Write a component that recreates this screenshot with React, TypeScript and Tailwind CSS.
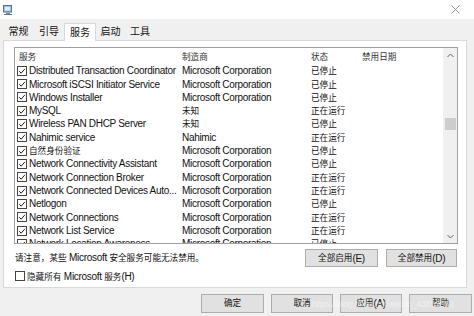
import React from "react";

const CJK = /([\u3000-\u303f\u3400-\u9fff\uff00-\uffef]+)/;

function T({ s, cjk = "text-[8.6px]" }: { s: string; cjk?: string }) {
  const parts = s.split(CJK);
  return (
    <>
      {parts.map((p, i) =>
        CJK.test(p) ? (
          <span key={i} className={cjk + " tracking-normal"}>
            {p}
          </span>
        ) : (
          <span key={i}>{p}</span>
        )
      )}
    </>
  );
}

const rows: [string, string, string][] = [
  ["Distributed Transaction Coordinator", "Microsoft Corporation", "已停止"],
  ["Microsoft iSCSI Initiator Service", "Microsoft Corporation", "已停止"],
  ["Windows Installer", "Microsoft Corporation", "已停止"],
  ["MySQL", "未知", "正在运行"],
  ["Wireless PAN DHCP Server", "未知", "已停止"],
  ["Nahimic service", "Nahimic", "正在运行"],
  ["自然身份验证", "Microsoft Corporation", "已停止"],
  ["Network Connectivity Assistant", "Microsoft Corporation", "已停止"],
  ["Network Connection Broker", "Microsoft Corporation", "正在运行"],
  ["Network Connected Devices Auto...", "Microsoft Corporation", "正在运行"],
  ["Netlogon", "Microsoft Corporation", "已停止"],
  ["Network Connections", "Microsoft Corporation", "正在运行"],
  ["Network List Service", "Microsoft Corporation", "正在运行"],
  ["Network Location Awareness", "Microsoft Corporation", "已停止"],
];

function Check({ checked = true }: { checked?: boolean }) {
  return (
    <svg width="10" height="10" viewBox="0 0 10 10" className="shrink-0">
      <rect x="0.5" y="0.5" width="9" height="9" fill="#fff" stroke="#444" strokeWidth="1" />
      {checked && (
        <path d="M2.2 5.2 L4.2 7.2 L7.9 2.8" fill="none" stroke="#222" strokeWidth="1" />
      )}
    </svg>
  );
}

function Btn({ label, w }: { label: string; w: string }) {
  return (
    <div
      className={
        "h-full flex items-center justify-center bg-[#e1e1e1] border border-[#adadad] text-[#111] " + w
      }
    >
      <T s={label} />
    </div>
  );
}

export default function App() {
  return (
    <div
      className="w-[474px] h-[316px] bg-[#f0f0f0] relative overflow-hidden text-[10px] tracking-[-0.3px] text-[#111] flex flex-col"
      style={{ fontFamily: '"Liberation Sans", "Noto Sans CJK SC", sans-serif' }}
    >
      {/* title bar */}
      <div className="h-[19px] bg-white flex items-center justify-between pl-[3px] pr-[14px] shrink-0">
        <svg width="10" height="10" viewBox="0 0 10 10">
          <rect x="0.5" y="0.5" width="8" height="6.5" fill="#9fc3e6" stroke="#5a6f8a" />
          <rect x="2" y="2" width="5" height="3.5" fill="#dfeefb" />
          <rect x="3" y="7.5" width="4" height="1.5" fill="#7d8ea4" />
          <rect x="1" y="9" width="8" height="1" fill="#5a6f8a" />
        </svg>
        <svg width="9" height="9" viewBox="0 0 9 9">
          <path d="M0.5 0.5 L8.5 8.5 M8.5 0.5 L0.5 8.5" stroke="#8a8a8a" strokeWidth="0.9" />
        </svg>
      </div>

      {/* tabs */}
      <div className="h-[21px] flex items-end pl-[3px] shrink-0 text-[10px]">
        {[
          ["常规", "w-[31px]"],
          ["引导", "w-[30px]"],
        ].map(([t, w]) => (
          <div key={t} className={"h-[17px] flex items-center justify-center " + w}>
            <span className="text-[10px] tracking-normal">{t}</span>
          </div>
        ))}
        <div className="h-[18px] w-[32px] bg-white border border-b-0 border-[#d9d9d9] flex items-center justify-center relative top-[1px] z-10">
          <span className="text-[10px] tracking-normal">服务</span>
        </div>
        {[
          ["启动", "w-[29px]"],
          ["工具", "w-[30px]"],
        ].map(([t, w]) => (
          <div key={t} className={"h-[17px] flex items-center justify-center " + w}>
            <span className="text-[10px] tracking-normal">{t}</span>
          </div>
        ))}
      </div>

      {/* panel */}
      <div className="mx-[3px] w-[464px] h-[248px] bg-white border border-[#d9d9d9] pl-[10px] pr-[8px] pt-[6px] shrink-0 flex flex-col">
        {/* list */}
        <div className="h-[197px] border border-[#a0a0a0] flex shrink-0">
          <div className="flex-1 overflow-hidden">
            <div className="h-[16px] flex items-center text-[#333]">
              <div className="w-[167px] pl-[4px]">
                <T s="服务" />
              </div>
              <div className="w-[129px]">
                <T s="制造商" />
              </div>
              <div className="w-[51px]">
                <T s="状态" />
              </div>
              <div>
                <T s="禁用日期" />
              </div>
            </div>
            {rows.map((r, i) => (
              <div key={i} className="h-[13.33px] flex items-center whitespace-nowrap">
                <div className="w-[167px] pl-[2px] flex items-center gap-[2px]">
                  <Check />
                  <span>
                    <T s={r[0]} />
                  </span>
                </div>
                <div className="w-[129px]">
                  <T s={r[1]} />
                </div>
                <div className="w-[51px]">
                  <T s={r[2]} />
                </div>
              </div>
            ))}
          </div>
          <div className="w-[14px] bg-[#f0f0f0] flex flex-col items-center">
            <div className="h-[14px] flex items-center justify-center">
              <svg width="7" height="5" viewBox="0 0 7 5">
                <path d="M0.5 4 L3.5 1 L6.5 4" fill="none" stroke="#606060" strokeWidth="1" />
              </svg>
            </div>
            <div className="h-[56px]" />
            <div className="h-[12px] w-[11px] bg-[#cdcdcd]" />
            <div className="flex-1" />
            <div className="h-[14px] flex items-center justify-center">
              <svg width="7" height="5" viewBox="0 0 7 5">
                <path d="M0.5 1 L3.5 4 L6.5 1" fill="none" stroke="#606060" strokeWidth="1" />
              </svg>
            </div>
          </div>
        </div>

        {/* note + buttons */}
        <div className="h-[18px] mt-[5px] flex items-start justify-between shrink-0">
          <div className="pl-[1px] pt-[1px]">
            <T s="请注意，某些 Microsoft 安全服务可能无法禁用。" />
          </div>
          <div className="flex gap-[8px] h-full pr-[1px]">
            <Btn label="全部启用(E)" w="w-[73px]" />
            <Btn label="全部禁用(D)" w="w-[71px]" />
          </div>
        </div>

        {/* hide checkbox */}
        <div className="mt-[3px] flex items-center gap-[2px] pl-[1px] h-[12px]">
          <Check checked={false} />
          <span>
            <T s="隐藏所有 Microsoft 服务(H)" />
          </span>
        </div>
      </div>

      {/* bottom buttons */}
      <div className="h-[19px] mt-[6px] flex justify-end gap-[7px] pr-[2px] shrink-0">
        <Btn label="确定" w="w-[63px]" />
        <Btn label="取消" w="w-[62px]" />
        <Btn label="应用(A)" w="w-[62px]" />
        <Btn label="帮助" w="w-[63px]" />
      </div>

      {/* watermark */}
      <div className="absolute left-[312px] top-[298px] text-[9px] text-white/50 whitespace-nowrap pointer-events-none">
        https://blog.csdn.net/weixin_43859562
      </div>
    </div>
  );
}
